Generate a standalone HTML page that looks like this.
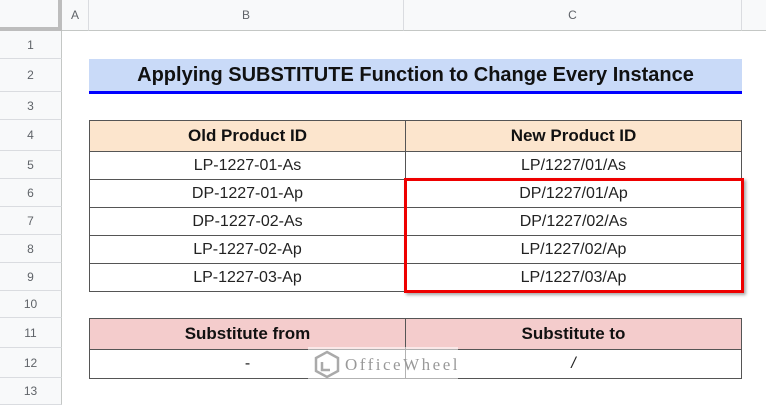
<!DOCTYPE html><html><head><style>
body{margin:0;width:766px;height:405px;overflow:hidden;background:#fff;font-family:"Liberation Sans",Arial,sans-serif;position:relative}
.a{position:absolute;box-sizing:border-box}
.rh{position:absolute;left:0;width:62px;background:#f8f9fa;border-bottom:1px solid #dadce0;border-right:1px solid #c4c7c5;color:#5f6368;font-size:12px;text-align:center;box-sizing:border-box}
.ch{position:absolute;top:0;height:31px;background:#f8f9fa;border-right:1px solid #dadce0;border-bottom:1px solid #c4c7c5;color:#5f6368;font-size:12px;text-align:center;line-height:31px;box-sizing:border-box}
table{position:absolute;border-collapse:collapse;font-size:16px;color:#222;table-layout:fixed}
td{border:1px solid #555;text-align:center;padding:0}
.h td{font-weight:bold;font-size:17px;color:#111}
</style></head><body>
<div class="ch" style="left:0;width:62px;border-right:4px solid #bdbdbd;border-bottom:4px solid #bdbdbd;height:31px"></div>
<div class="ch" style="left:62px;width:27px">A</div>
<div class="ch" style="left:89px;width:315px">B</div>
<div class="ch" style="left:404px;width:338px">C</div>
<div class="ch" style="left:742px;width:24px;border-right:none"></div>
<div class="rh" style="top:31px;height:28px;line-height:28px">1</div>
<div class="rh" style="top:59px;height:33px;line-height:33px">2</div>
<div class="rh" style="top:92px;height:28px;line-height:28px">3</div>
<div class="rh" style="top:120px;height:31px;line-height:31px">4</div>
<div class="rh" style="top:151px;height:28px;line-height:28px">5</div>
<div class="rh" style="top:179px;height:28px;line-height:28px">6</div>
<div class="rh" style="top:207px;height:28px;line-height:28px">7</div>
<div class="rh" style="top:235px;height:28px;line-height:28px">8</div>
<div class="rh" style="top:263px;height:28px;line-height:28px">9</div>
<div class="rh" style="top:291px;height:27px;line-height:27px">10</div>
<div class="rh" style="top:318px;height:30px;line-height:30px">11</div>
<div class="rh" style="top:348px;height:30px;line-height:30px">12</div>
<div class="rh" style="top:378px;height:27px;line-height:27px">13</div>
<div class="a" style="left:89px;top:59px;width:653px;height:35px;background:#c9daf8;border-bottom:3px solid #0000ff;text-align:center;font-weight:bold;font-size:20px;line-height:33px;color:#111">Applying SUBSTITUTE Function to Change Every Instance</div>
<table style="left:89px;top:120px;width:653px">
<tr class="h" style="height:31px;background:#fce5cd"><td style="width:315px">Old Product ID</td><td>New Product ID</td></tr>
<tr style="height:28px"><td>LP-1227-01-As</td><td>LP/1227/01/As</td></tr>
<tr style="height:28px"><td>DP-1227-01-Ap</td><td>DP/1227/01/Ap</td></tr>
<tr style="height:28px"><td>DP-1227-02-As</td><td>DP/1227/02/As</td></tr>
<tr style="height:28px"><td>LP-1227-02-Ap</td><td>LP/1227/02/Ap</td></tr>
<tr style="height:28px"><td>LP-1227-03-Ap</td><td>LP/1227/03/Ap</td></tr>
</table>
<div class="a" style="left:404px;top:178px;width:340px;height:115px;border:3px solid #ee0000;box-shadow:2px 2px 3px rgba(0,0,0,.35)"></div>
<table style="left:89px;top:318px;width:653px">
<tr class="h" style="height:31px;background:#f4cccc"><td style="width:315px">Substitute from</td><td>Substitute to</td></tr>
<tr style="height:29px"><td>-</td><td><i>/</i></td></tr>
</table>
<div class="a" style="left:308px;top:347px;width:150px;height:32px;background:rgba(255,255,255,.55)"></div>
<svg class="a" style="left:313px;top:350px" width="28" height="30" viewBox="0 0 28 30"><path d="M14 2 L25 8 L25 21 L14 27 L3 21 L3 8 Z" fill="none" stroke="#aaa" stroke-width="2.5"/><path d="M9 12 v8 h8" fill="none" stroke="#aaa" stroke-width="2.5"/></svg>
<div class="a" style="left:345px;top:355px;font-family:'Liberation Serif',serif;font-size:17px;letter-spacing:2.5px;color:#999">OfficeWheel</div>
</body></html>
